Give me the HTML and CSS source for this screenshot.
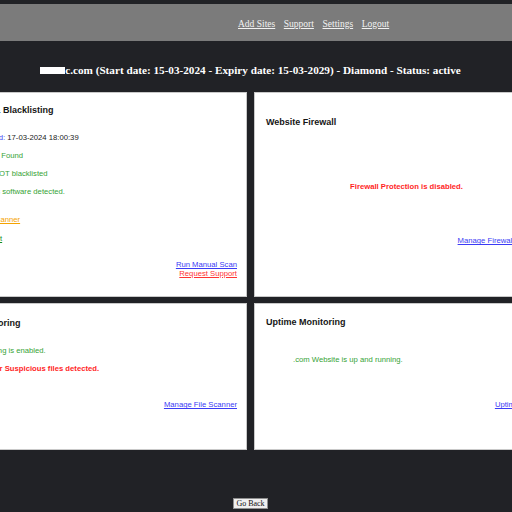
FILE: index.html
```html
<!DOCTYPE html>
<html lang="en">
<head>
<meta charset="utf-8">
<title>Site Dashboard</title>
<link rel="stylesheet" href="styles.css">
</head>
<body>
<div class="page">
  <header class="topbar">
    <nav class="nav">
      <a href="#">Add Sites</a>
      <a href="#">Support</a>
      <a href="#">Settings</a>
      <a href="#">Logout</a>
    </nav>
  </header>

  <h1 class="site-title"><span class="redact"></span>c.com (Start date: 15-03-2024 - Expiry date: 15-03-2029) - Diamond - Status: active</h1>

  <main class="grid">
    <section class="card card-malware">
      <h2>Malware &amp; Blacklisting</h2>
      <p class="first"><span class="label">Last Scanned:</span> 17-03-2024 18:00:39</p>
      <p class="ok">Malware Not Found</p>
      <p class="ok">Website is NOT blacklisted</p>
      <p class="ok">No malicious software detected.</p>
      <p class="gap"><a class="warn-link" href="#">Open File Scanner</a></p>
      <p class="near"><a class="ok-link" href="#">Latest Report</a></p>
      <div class="actions">
        <a class="blue-link" href="#">Run Manual Scan</a>
        <a class="red-link" href="#">Request Support</a>
      </div>
    </section>

    <section class="card card-firewall">
      <h2>Website Firewall</h2>
      <p class="alert center">Firewall Protection is disabled.</p>
      <div class="actions fw-actions">
        <a class="blue-link" href="#">Manage Firewall</a>
      </div>
    </section>

    <section class="card card-files">
      <h2>File Monitoring</h2>
      <p class="ok first">File Monitoring is enabled.</p>
      <p class="alert">1 Malware or Suspicious files detected.</p>
      <div class="actions files-actions">
        <a class="blue-link" href="#">Manage File Scanner</a>
      </div>
    </section>

    <section class="card card-uptime">
      <h2>Uptime Monitoring</h2>
      <p class="ok uptime-text"><span class="redact-inline"></span>.com Website is up and running.</p>
      <div class="actions uptime-actions">
        <a class="blue-link" href="#">Uptime Monitor</a>
      </div>
    </section>
  </main>

  <div class="footer">
    <button class="back" type="button">Go Back</button>
  </div>
</div>
</body>
</html>
```

FILE: styles.css
```css
html, body {
  margin: 0;
  padding: 0;
  background: #212226;
}

body {
  font-family: "Liberation Serif", "Times New Roman", serif;
  overflow: hidden;
}

.page {
  width: 613px;
  margin-left: -56px;
}

.topbar {
  box-sizing: border-box;
  margin-top: 4px;
  height: 37px;
  background: #7b7b7b;
  display: flex;
  align-items: center;
  padding: 3px 0 0 294px;
}

.nav {
  display: flex;
  gap: 8.6px;
}

.nav a {
  color: #f2f2f2;
  font-size: 9.5px;
  line-height: 11px;
  text-decoration: underline;
}

.site-title {
  margin: 22.5px 0 15.5px;
  color: #ffffff;
  font-size: 11.2px;
  line-height: 13px;
  font-weight: bold;
  text-align: center;
}

.redact {
  display: inline-block;
  width: 25px;
  height: 7px;
  background: #ffffff;
  vertical-align: 0;
}

.grid {
  display: grid;
  grid-template-columns: 303px 303px;
  grid-template-rows: 205px 147px;
  gap: 6px 7px;
}

.card {
  box-sizing: border-box;
  background: #ffffff;
  border: 1px solid #c9c9c9;
  padding: 0 9px 0 11px;
  font-family: "Liberation Sans", Arial, sans-serif;
  font-size: 7.7px;
  line-height: 9px;
  color: #222;
  display: flex;
  flex-direction: column;
}

.card h2 {
  margin: 0;
  font-size: 9px;
  line-height: 11px;
  font-weight: bold;
  color: #151515;
}

.card p {
  margin: 9px 0 0;
}

.card p.first {
  margin-top: 17.7px;
}

.card p.gap {
  margin-top: 18.7px;
}

.card p.near {
  margin-top: 9.7px;
}

.card-malware { padding-top: 11.5px; }
.card-firewall { padding-top: 24.2px; }
.card-files { padding-top: 13.8px; }
.card-uptime { padding-top: 13.2px; }

.label {
  color: #3b3bf5;
}

.ok {
  color: #36a336;
}

.alert {
  color: #ff1f1f;
  font-weight: bold;
}

.center {
  text-align: center;
}

.card-firewall .alert {
  margin-top: 54.3px;
}

.uptime-text {
  margin-top: 27.3px !important;
}

.redact-inline {
  display: inline-block;
  width: 27px;
  height: 7px;
}

.actions {
  display: flex;
  flex-direction: column;
  align-items: flex-end;
  margin-top: 17px;
}

.fw-actions {
  margin-top: 45px;
  padding-right: 33px;
}

.files-actions {
  margin-top: 27px;
}

.uptime-actions {
  margin-top: 36px;
}

.card a {
  text-decoration: underline;
  line-height: 9px;
}

.blue-link { color: #3b3bf5; }
.red-link { color: #ff3333; }
.warn-link { color: #f5a300; }
.ok-link { color: #0f8f2a; }

.footer {
  margin-top: 48px;
  display: flex;
  justify-content: center;
}

.back {
  font-family: "Liberation Serif", "Times New Roman", serif;
  font-size: 8px;
  line-height: 9px;
  padding: 0 2px;
  margin: 0;
  border: 1px solid #8f8f8f;
  border-radius: 0;
  background: #efefef;
  color: #111;
}
```
